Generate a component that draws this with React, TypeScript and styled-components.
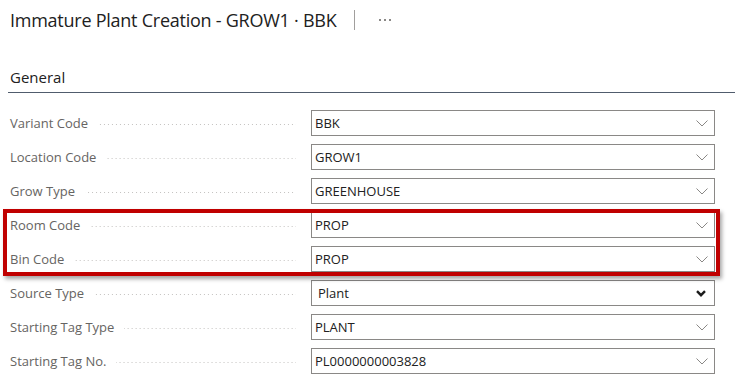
import React from "react";
import styled, { createGlobalStyle } from "styled-components";

const GlobalStyle = createGlobalStyle`
  html, body {
    margin: 0;
    padding: 0;
    background: #ffffff;
  }
  body {
    font-family: "Segoe UI", "Open Sans", "Noto Sans", sans-serif;
    color: #212121;
  }
`;

type Field = {
  label: string;
  value: string;
  select?: boolean;
};

const topFields: Field[] = [
  { label: "Variant Code", value: "BBK" },
  { label: "Location Code", value: "GROW1" },
  { label: "Grow Type", value: "GREENHOUSE" },
];

const highlighted: Field[] = [
  { label: "Room Code", value: "PROP" },
  { label: "Bin Code", value: "PROP" },
];

const bottomFields: Field[] = [
  { label: "Source Type", value: "Plant", select: true },
  { label: "Starting Tag Type", value: "PLANT" },
  { label: "Starting Tag No.", value: "PL0000000003828" },
];

const LightChevron = () => (
  <svg width="12" height="7" viewBox="0 0 12 7">
    <path d="M0.5 0.5 L6 6 L11.5 0.5" fill="none" stroke="#8a8886" strokeWidth="1" />
  </svg>
);

const BoldChevron = () => (
  <svg width="10" height="7" viewBox="0 0 10 7">
    <path d="M1 1.2 L5 5.2 L9 1.2" fill="none" stroke="#1b1b1b" strokeWidth="2.4" />
  </svg>
);

const FieldRow = ({ field }: { field: Field }) => (
  <Row>
    <LabelCell>
      <Label>{field.label}</Label>
      <Leader />
    </LabelCell>
    <Input $select={field.select}>
      <Value>{field.value}</Value>
      {field.select ? <BoldChevron /> : <LightChevron />}
    </Input>
  </Row>
);

const App = () => {
  return (
    <>
      <GlobalStyle />
      <Page>
        <Header>
          <Title>Immature Plant Creation - GROW1 · BBK</Title>
          <Divider />
          <More>
            <span />
            <span />
            <span />
          </More>
        </Header>
        <Section>
          <SectionTitle>General</SectionTitle>
          <Form>
            {topFields.map((f) => (
              <FieldRow key={f.label} field={f} />
            ))}
            <Highlight>
              {highlighted.map((f) => (
                <FieldRow key={f.label} field={f} />
              ))}
            </Highlight>
            {bottomFields.map((f) => (
              <FieldRow key={f.label} field={f} />
            ))}
          </Form>
        </Section>
      </Page>
    </>
  );
};

export default App;

const Page = styled.div`
  width: 748px;
  height: 391px;
  overflow: hidden;
  background: #ffffff;
`;

const Header = styled.div`
  display: flex;
  align-items: center;
  height: 40px;
  padding: 0 0 0 10px;
`;

const Title = styled.h1`
  margin: 0;
  font-size: 18px;
  font-weight: 400;
  color: #212121;
  letter-spacing: -0.25px;
  white-space: nowrap;
`;

const Divider = styled.div`
  width: 1px;
  height: 20px;
  background: #a19f9d;
  margin-left: 18px;
`;

const More = styled.div`
  display: flex;
  gap: 3px;
  margin-left: 24px;
  span {
    width: 2px;
    height: 2px;
    background: #8a8886;
  }
`;

const Section = styled.div`
  padding: 25px 13px 0 8px;
`;

const SectionTitle = styled.h2`
  margin: 0;
  padding: 0 0 3px 2px;
  font-size: 15px;
  font-weight: 500;
  color: #212121;
  border-bottom: 1px solid #505c6d;
  line-height: 24px;
`;

const Form = styled.div`
  display: flex;
  flex-direction: column;
  gap: 8px;
  padding: 17px 0 0 2px;
`;

const Highlight = styled.div`
  position: relative;
  align-self: flex-start;
  display: flex;
  flex-direction: column;
  gap: 8px;
  &::after {
    content: "";
    position: absolute;
    top: -3px;
    left: -7px;
    right: -5px;
    bottom: -4px;
    border: 4px solid #c00000;
    box-shadow: 2px 3px 4px rgba(0, 0, 0, 0.35);
    pointer-events: none;
  }
`;

const Row = styled.div`
  display: grid;
  grid-template-columns: 286px 404px;
  column-gap: 15px;
  align-items: center;
  height: 26px;
`;

const LabelCell = styled.div`
  display: flex;
  align-items: center;
  gap: 10px;
  min-width: 0;
`;

const Label = styled.span`
  font-size: 13px;
  color: #666462;
  white-space: nowrap;
`;

const Leader = styled.span`
  flex: 1;
  height: 1px;
  margin-top: 3px;
  background-image: linear-gradient(to right, #c4c2c0 1px, transparent 1px);
  background-size: 4px 1px;
  background-repeat: repeat-x;
  background-position: right center;
`;

const Input = styled.div<{ $select?: boolean }>`
  box-sizing: border-box;
  height: 26px;
  display: flex;
  align-items: center;
  justify-content: space-between;
  border: 1px solid #8a8886;
  padding: 0 ${(p) => (p.$select ? "8px" : "6px")} 0 ${(p) => (p.$select ? "6px" : "3px")};
`;

const Value = styled.span`
  font-size: 13px;
  color: #212121;
  white-space: nowrap;
`;
